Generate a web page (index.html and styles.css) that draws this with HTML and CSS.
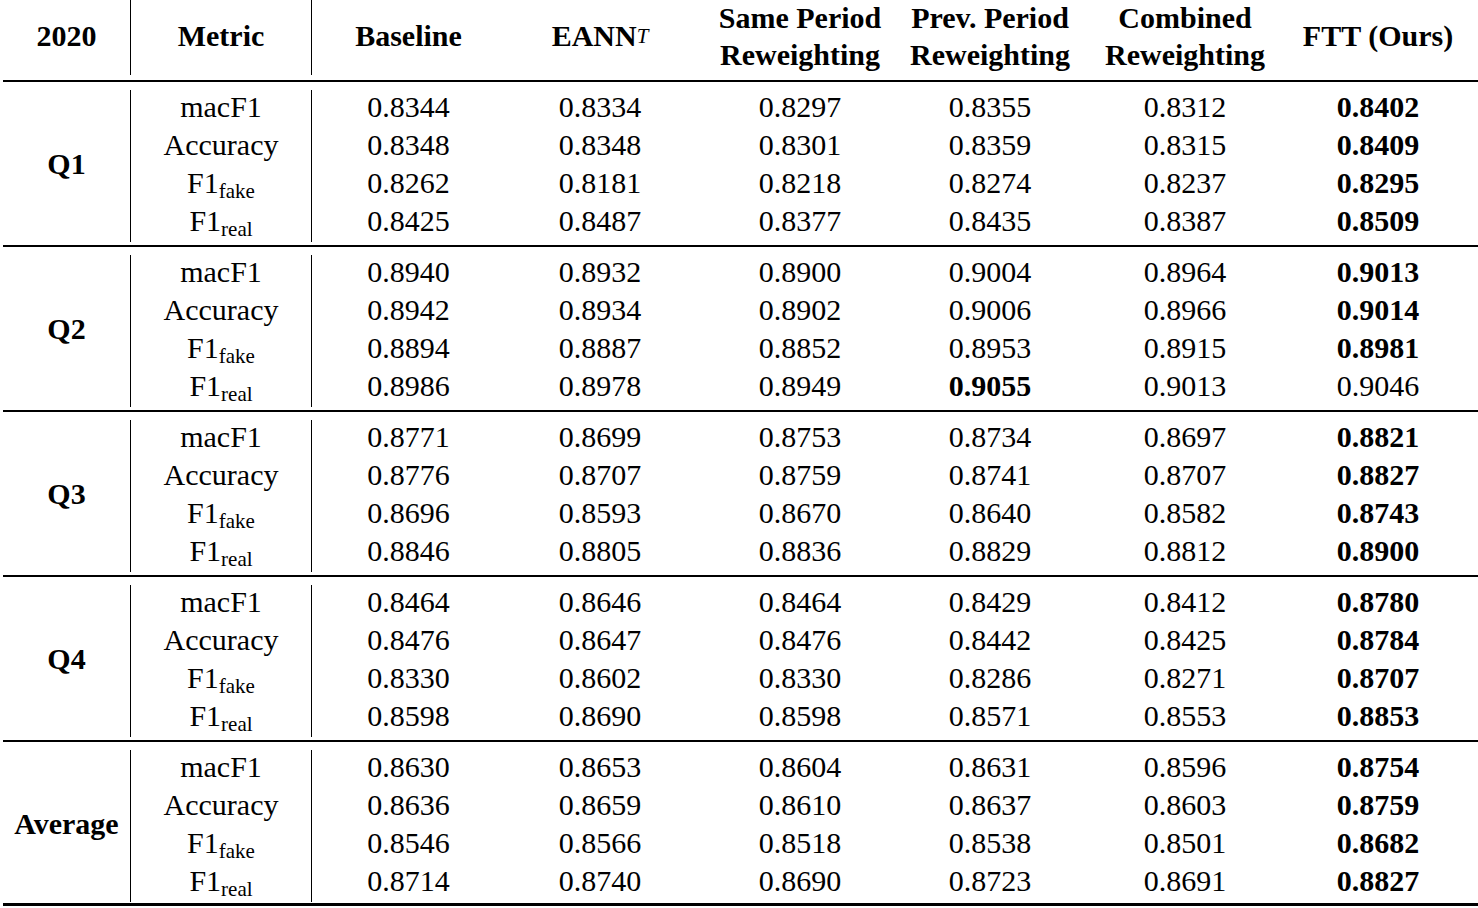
FILE: index.html
```html
<!DOCTYPE html>
<html>
<head>
<meta charset="utf-8">
<link rel="stylesheet" href="styles.css">
</head>
<body>
<div class="table">
  <div class="head">
    <div class="hc">2020</div>
    <div class="hc m">Metric</div>
    <div class="hc">Baseline</div>
    <div class="hc">EANN<sub class="it">T</sub></div>
    <div class="hc">Same Period<br>Reweighting</div>
    <div class="hc">Prev. Period<br>Reweighting</div>
    <div class="hc">Combined<br>Reweighting</div>
    <div class="hc">FTT (Ours)</div>
  </div>

  <div class="group">
    <div class="yr">Q1</div>
    <div class="c m">macF1</div><div class="c">0.8344</div><div class="c">0.8334</div><div class="c">0.8297</div><div class="c">0.8355</div><div class="c">0.8312</div><div class="c b">0.8402</div>
    <div class="c m">Accuracy</div><div class="c">0.8348</div><div class="c">0.8348</div><div class="c">0.8301</div><div class="c">0.8359</div><div class="c">0.8315</div><div class="c b">0.8409</div>
    <div class="c m">F1<sub>fake</sub></div><div class="c">0.8262</div><div class="c">0.8181</div><div class="c">0.8218</div><div class="c">0.8274</div><div class="c">0.8237</div><div class="c b">0.8295</div>
    <div class="c m">F1<sub>real</sub></div><div class="c">0.8425</div><div class="c">0.8487</div><div class="c">0.8377</div><div class="c">0.8435</div><div class="c">0.8387</div><div class="c b">0.8509</div>
  </div>

  <div class="group">
    <div class="yr">Q2</div>
    <div class="c m">macF1</div><div class="c">0.8940</div><div class="c">0.8932</div><div class="c">0.8900</div><div class="c">0.9004</div><div class="c">0.8964</div><div class="c b">0.9013</div>
    <div class="c m">Accuracy</div><div class="c">0.8942</div><div class="c">0.8934</div><div class="c">0.8902</div><div class="c">0.9006</div><div class="c">0.8966</div><div class="c b">0.9014</div>
    <div class="c m">F1<sub>fake</sub></div><div class="c">0.8894</div><div class="c">0.8887</div><div class="c">0.8852</div><div class="c">0.8953</div><div class="c">0.8915</div><div class="c b">0.8981</div>
    <div class="c m">F1<sub>real</sub></div><div class="c">0.8986</div><div class="c">0.8978</div><div class="c">0.8949</div><div class="c b">0.9055</div><div class="c">0.9013</div><div class="c">0.9046</div>
  </div>

  <div class="group">
    <div class="yr">Q3</div>
    <div class="c m">macF1</div><div class="c">0.8771</div><div class="c">0.8699</div><div class="c">0.8753</div><div class="c">0.8734</div><div class="c">0.8697</div><div class="c b">0.8821</div>
    <div class="c m">Accuracy</div><div class="c">0.8776</div><div class="c">0.8707</div><div class="c">0.8759</div><div class="c">0.8741</div><div class="c">0.8707</div><div class="c b">0.8827</div>
    <div class="c m">F1<sub>fake</sub></div><div class="c">0.8696</div><div class="c">0.8593</div><div class="c">0.8670</div><div class="c">0.8640</div><div class="c">0.8582</div><div class="c b">0.8743</div>
    <div class="c m">F1<sub>real</sub></div><div class="c">0.8846</div><div class="c">0.8805</div><div class="c">0.8836</div><div class="c">0.8829</div><div class="c">0.8812</div><div class="c b">0.8900</div>
  </div>

  <div class="group">
    <div class="yr">Q4</div>
    <div class="c m">macF1</div><div class="c">0.8464</div><div class="c">0.8646</div><div class="c">0.8464</div><div class="c">0.8429</div><div class="c">0.8412</div><div class="c b">0.8780</div>
    <div class="c m">Accuracy</div><div class="c">0.8476</div><div class="c">0.8647</div><div class="c">0.8476</div><div class="c">0.8442</div><div class="c">0.8425</div><div class="c b">0.8784</div>
    <div class="c m">F1<sub>fake</sub></div><div class="c">0.8330</div><div class="c">0.8602</div><div class="c">0.8330</div><div class="c">0.8286</div><div class="c">0.8271</div><div class="c b">0.8707</div>
    <div class="c m">F1<sub>real</sub></div><div class="c">0.8598</div><div class="c">0.8690</div><div class="c">0.8598</div><div class="c">0.8571</div><div class="c">0.8553</div><div class="c b">0.8853</div>
  </div>

  <div class="group last">
    <div class="yr">Average</div>
    <div class="c m">macF1</div><div class="c">0.8630</div><div class="c">0.8653</div><div class="c">0.8604</div><div class="c">0.8631</div><div class="c">0.8596</div><div class="c b">0.8754</div>
    <div class="c m">Accuracy</div><div class="c">0.8636</div><div class="c">0.8659</div><div class="c">0.8610</div><div class="c">0.8637</div><div class="c">0.8603</div><div class="c b">0.8759</div>
    <div class="c m">F1<sub>fake</sub></div><div class="c">0.8546</div><div class="c">0.8566</div><div class="c">0.8518</div><div class="c">0.8538</div><div class="c">0.8501</div><div class="c b">0.8682</div>
    <div class="c m">F1<sub>real</sub></div><div class="c">0.8714</div><div class="c">0.8740</div><div class="c">0.8690</div><div class="c">0.8723</div><div class="c">0.8691</div><div class="c b">0.8827</div>
  </div>
</div>
</body>
</html>
```
FILE: styles.css
```css
html, body {
  margin: 0;
  padding: 0;
  background: #fff;
}
body {
  font-family: "Liberation Serif", "Times New Roman", serif;
  font-size: 30px;
  color: #000;
}
.table {
  margin-left: 3px;
  width: 1475px;
}
.head,
.group {
  display: grid;
  grid-template-columns: 127px 182px 193px 190px 210px 170px 220px 166px;
}
.head {
  grid-template-rows: 75px;
  padding-bottom: 5px;
  border-bottom: 2px solid #000;
}
.hc {
  display: flex;
  align-items: center;
  justify-content: center;
  text-align: center;
  font-weight: bold;
  line-height: 37px;
  padding-bottom: 4px;
}
.group {
  grid-auto-rows: 38px;
  padding: 8px 0 3px;
  border-bottom: 2px solid #000;
}
.group.last {
  padding-bottom: 1px;
  border-bottom: 3px solid #000;
}
.yr {
  grid-row: span 4;
  display: flex;
  align-items: center;
  justify-content: center;
  font-weight: bold;
  padding-bottom: 4px;
}
.c {
  text-align: center;
  line-height: 34px;
  padding-bottom: 4px;
  white-space: nowrap;
}
.m {
  box-sizing: border-box;
  border-left: 1px solid #000;
  border-right: 1px solid #000;
}
.b {
  font-weight: bold;
}
sub {
  font-size: 21px;
  line-height: 0;
  vertical-align: -5px;
  font-weight: normal;
}
sub.it {
  font-style: italic;
  vertical-align: -6px;
}
```
